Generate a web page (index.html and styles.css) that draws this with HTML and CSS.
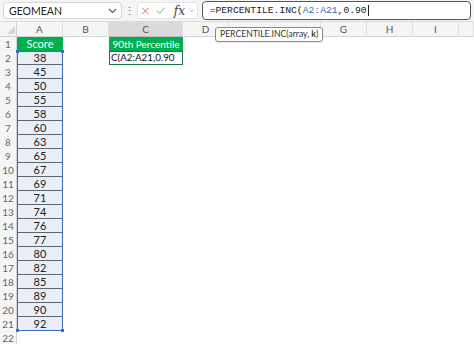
FILE: index.html
```html
<!DOCTYPE html>
<html lang="en">
<head>
    <meta charset="UTF-8">
    <title>PERCENTILE.INC</title>
    <link rel="stylesheet" href="styles.css">
</head>
<body>
    <div class="topbar">
        <div class="namebox">
            <span>GEOMEAN</span>
            <svg class="chev" width="9" height="6" viewBox="0 0 9 6"><path d="M1 1l3.5 3.5L8 1" fill="none" stroke="#555" stroke-width="1.1"/></svg>
        </div>
        <div class="dots">⋮</div>
        <div class="fxbox">
            <svg width="12" height="12" viewBox="0 0 12 12"><path d="M1.5 1.5l9 9M10.5 1.5l-9 9" stroke="#e0524c" stroke-width="1.2"/></svg>
            <svg width="13" height="11" viewBox="0 0 13 11"><path d="M1 5.5l4 4L12 1.5" fill="none" stroke="#4caf63" stroke-width="1.2"/></svg>
            <span class="fx">fx</span>
            <svg width="8" height="5" viewBox="0 0 8 5"><path d="M1 1l3 3 3-3" fill="none" stroke="#999" stroke-width="1"/></svg>
        </div>
        <div class="formula">=PERCENTILE.INC(<span class="ref">A2:A21</span>,0.90<span class="caret"></span></div>
    </div>

    <div class="sheet">
        <div class="col rowhead">
            <div class="hd corner"><svg width="8" height="8" viewBox="0 0 8 8"><path d="M8 0V8H0z" fill="#d4d4d4"/></svg></div>
            <div class="cell">1</div><div class="cell">2</div><div class="cell">3</div><div class="cell">4</div>
            <div class="cell">5</div><div class="cell">6</div><div class="cell">7</div><div class="cell">8</div>
            <div class="cell">9</div><div class="cell">10</div><div class="cell">11</div><div class="cell">12</div>
            <div class="cell">13</div><div class="cell">14</div><div class="cell">15</div><div class="cell">16</div>
            <div class="cell">17</div><div class="cell">18</div><div class="cell">19</div><div class="cell">20</div>
            <div class="cell">21</div><div class="cell">22</div>
        </div>
        <div class="col col-a">
            <div class="hd">A</div>
            <div class="cell title">Score</div>
            <div class="cell num">38</div><div class="cell num">45</div><div class="cell num">50</div><div class="cell num">55</div>
            <div class="cell num">58</div><div class="cell num">60</div><div class="cell num">63</div><div class="cell num">65</div>
            <div class="cell num">67</div><div class="cell num">69</div><div class="cell num">71</div><div class="cell num">74</div>
            <div class="cell num">76</div><div class="cell num">77</div><div class="cell num">80</div><div class="cell num">82</div>
            <div class="cell num">85</div><div class="cell num">89</div><div class="cell num">90</div><div class="cell num">92</div>
        </div>
        <div class="col"><div class="hd">B</div></div>
        <div class="col col-c">
            <div class="hd active">C</div>
            <div class="cell title narrow">90th Percentile</div>
            <div class="cell editing">C(A2:A21,0.90</div>
        </div>
        <div class="col"><div class="hd">D</div></div>
        <!-- E and F sit under the tooltip -->
        <div class="col"><div class="hd"></div></div>
        <div class="col"><div class="hd"></div></div>
        <div class="col"><div class="hd">G</div></div>
        <div class="col"><div class="hd">H</div></div>
        <div class="col"><div class="hd">I</div></div>
        <div class="col col-end"><div class="hd"></div></div>

        <!-- range A2:A21 picked by the formula -->
        <div class="range">
            <i class="handle tl"></i><i class="handle tr"></i><i class="handle bl"></i><i class="handle br"></i>
        </div>
        <div class="tip">PERCENTILE.INC(array, <b>k</b>)</div>
    </div>
</body>
</html>
```

FILE: styles.css
```css
body {
    margin: 0;
    background: #fff;
    font-family: Lato, "Liberation Sans", sans-serif;
    color: #222;
    overflow: hidden;
}

/* formula bar */
.topbar {
    display: flex;
    align-items: center;
    height: 21px;
    padding: 0 3px;
    background: #f5f5f5;
    border-bottom: 1px solid #dadada;
}
.namebox {
    display: flex;
    align-items: center;
    justify-content: space-between;
    box-sizing: border-box;
    width: 119px;
    height: 17px;
    padding: 0 4px 0 5px;
    background: #fff;
    border: 1px solid #d6d6d6;
    border-radius: 4px;
    font-size: 10.5px;
}
.dots {
    width: 15px;
    text-align: center;
    color: #666;
    font-size: 11px;
}
.fxbox {
    display: flex;
    align-items: center;
    gap: 7px;
    box-sizing: border-box;
    width: 61px;
    height: 17px;
    padding: 0 2px 0 3px;
    background: #fff;
    border: 1px solid #e2e2e2;
    border-radius: 3px;
}
.fx {
    font-family: "DejaVu Serif", "Liberation Serif", serif;
    font-style: italic;
    font-size: 12px;
    color: #444;
    margin-left: 1px;
    margin-right: -3px;
}
.formula {
    display: flex;
    align-items: center;
    box-sizing: border-box;
    margin-left: 4px;
    width: 270px;
    height: 19px;
    padding-left: 7px;
    background: #fff;
    border: 1px solid #555;
    border-radius: 4px;
    font-family: "Liberation Mono", monospace;
    font-size: 9.7px;
    color: #222;
}
.formula .ref {
    color: #2f6db5;
}
.caret {
    display: inline-block;
    width: 1px;
    height: 11px;
    margin-left: 1px;
    background: #222;
}

/* grid */
.sheet {
    position: relative;
    display: flex;
}
.col {
    display: flex;
    flex-direction: column;
    flex-shrink: 0;
    width: 46px;
}
.col-end {
    width: 15px;
}
.rowhead {
    width: 17px;
    background: #f5f5f5;
    border-right: 1px solid #d4d4d4;
    box-sizing: border-box;
}
.col-c {
    width: 74px;
}
.hd {
    box-sizing: border-box;
    height: 15px;
    line-height: 15px;
    text-align: center;
    font-size: 10px;
    color: #555;
    background: #f5f5f5;
    border-right: 1px solid #e0e0e0;
    border-bottom: 1px solid #d4d4d4;
}
.hd.active {
    background: #dadada;
    border-bottom-color: #b9b9b9;
}
.corner {
    display: flex;
    align-items: flex-end;
    justify-content: flex-end;
    padding: 0 1px 2px 0;
    border-right: none;
}
.cell {
    box-sizing: border-box;
    height: 14px;
    line-height: 14px;
    font-size: 11px;
}
.rowhead .cell {
    text-align: center;
    font-size: 10px;
    color: #666;
}
.title {
    background: #00b050;
    color: #fff;
    text-align: center;
}
.title.narrow {
    font-size: 10px;
}
.num {
    text-align: center;
    background: #e9eef7;
    border-bottom: 1px solid #5e6670;
}
.editing {
    border: 1.5px solid #217346;
    line-height: 11px;
    padding-left: 1px;
    font-size: 9.8px;
    color: #111;
    white-space: nowrap;
    overflow: hidden;
}

/* overlays */
.range {
    position: absolute;
    left: 17px;
    top: 29px;
    width: 46px;
    height: 280px;
    box-sizing: border-box;
    border: 1px solid #3b6cc4;
}
.handle {
    position: absolute;
    width: 3px;
    height: 3px;
    background: #3b6cc4;
}
.tl { left: -2px; top: -2px; }
.tr { right: -2px; top: -2px; }
.bl { left: -2px; bottom: -2px; }
.br { right: -2px; bottom: -2px; }
.tip {
    position: absolute;
    left: 215px;
    top: 5px;
    padding: 0 4px;
    height: 13px;
    line-height: 13px;
    background: #fff;
    border: 1px solid #8a8a8a;
    border-radius: 3px;
    font-size: 8.6px;
    color: #333;
    white-space: nowrap;
    box-shadow: 0 1px 2px rgba(0, 0, 0, 0.1);
}
```
